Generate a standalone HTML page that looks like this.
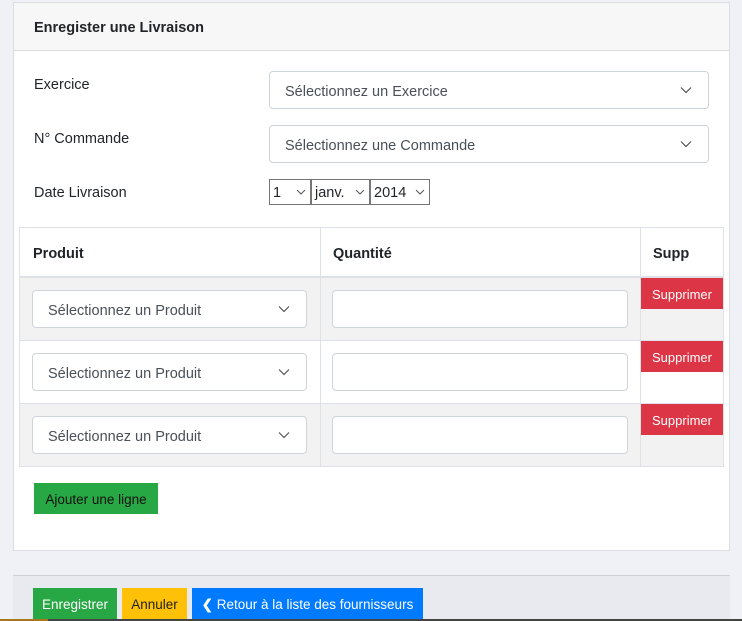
<!DOCTYPE html>
<html><head><meta charset="utf-8"><style>
*{box-sizing:border-box;margin:0;padding:0}
body{width:742px;height:621px;background:#f0f1f6;font-family:"Liberation Sans",sans-serif;color:#212529;position:relative;overflow:hidden;font-size:14px}
.a{position:absolute}
.card{left:13px;top:2px;width:717px;height:549px;background:#fff;border:1px solid #dcdde2}
.hdr{left:14px;top:3px;width:715px;height:48px;background:#f7f7f7;border-bottom:1px solid #dcdde2}
.t{font-weight:bold;font-size:14.5px;left:34px;top:20px}
.lbl{left:34px;font-size:14.5px}
.sel{background:#fff;border:1px solid #ced4da;border-radius:4px;color:#495057;font-size:14.5px;padding-left:15px;padding-top:3px;display:flex;align-items:center}
.chev{position:absolute;right:16px;top:50%;margin-top:-4px}
.ds{border:1px solid #767676;height:26px;top:179px;font-size:14.5px;padding-left:3px;line-height:27px;background:#fff}
.tb{left:19px;top:227px;width:705px;height:240px;border:1px solid #dee2e6}
.th{font-weight:bold;font-size:14.5px;top:246px}
.row{left:20px;width:703px;border-top:1px solid #dee2e6}
.vl{width:1px;background:#dee2e6;top:228px;height:238px}
.del{left:641px;width:82px;height:31px;background:#dc3545;color:#fff;font-size:13px;text-align:center;line-height:34px}
.inp{left:332px;width:296px;height:38px;background:#fff;border:1px solid #ced4da;border-radius:4px}
.btn{height:31px;line-height:33px;font-size:13.5px;text-align:center}
</style></head><body>
<div class="a card"></div>
<div class="a hdr"></div>
<div class="a t">Enregister une Livraison</div>
<div class="a lbl" style="top:77px">Exercice</div>
<div class="a lbl" style="top:131px">N° Commande</div>
<div class="a lbl" style="top:185px">Date Livraison</div>
<div class="a sel" style="left:269px;top:71px;width:440px;height:38px">Sélectionnez un Exercice<svg class="chev" width="12" height="8" viewBox="0 0 12 8"><path d="M1 1.5l5 5 5-5" fill="none" stroke="#444" stroke-width="1"/></svg></div>
<div class="a sel" style="left:269px;top:125px;width:440px;height:38px">Sélectionnez une Commande<svg class="chev" width="12" height="8" viewBox="0 0 12 8"><path d="M1 1.5l5 5 5-5" fill="none" stroke="#444" stroke-width="1"/></svg></div>
<div class="a ds" style="left:269px;width:42px">1<svg style="position:absolute;right:4px;top:9px" width="10" height="7" viewBox="0 0 10 7"><path d="M1 1l4 4 4-4" fill="none" stroke="#555"/></svg></div>
<div class="a ds" style="left:311px;width:59px">janv.<svg style="position:absolute;right:4px;top:9px" width="10" height="7" viewBox="0 0 10 7"><path d="M1 1l4 4 4-4" fill="none" stroke="#555"/></svg></div>
<div class="a ds" style="left:370px;width:60px">2014<svg style="position:absolute;right:4px;top:9px" width="10" height="7" viewBox="0 0 10 7"><path d="M1 1l4 4 4-4" fill="none" stroke="#555"/></svg></div>
<div class="a tb"></div>
<div class="a row" style="top:276px;height:65px;background:#f2f2f2;border-top:2px solid #dee2e6"></div>
<div class="a row" style="top:340px;height:64px;background:#fff"></div>
<div class="a row" style="top:403px;height:63px;background:#f2f2f2"></div>
<div class="a vl" style="left:320px"></div>
<div class="a vl" style="left:640px"></div>
<div class="a th" style="left:33px">Produit</div>
<div class="a th" style="left:333px">Quantité</div>
<div class="a th" style="left:653px">Supp</div>
<div class="a sel" style="left:32px;top:290px;width:275px;height:38px">Sélectionnez un Produit<svg class="chev" width="12" height="8" viewBox="0 0 12 8"><path d="M1 1.5l5 5 5-5" fill="none" stroke="#444" stroke-width="1"/></svg></div>
<div class="a sel" style="left:32px;top:353px;width:275px;height:38px">Sélectionnez un Produit<svg class="chev" width="12" height="8" viewBox="0 0 12 8"><path d="M1 1.5l5 5 5-5" fill="none" stroke="#444" stroke-width="1"/></svg></div>
<div class="a sel" style="left:32px;top:416px;width:275px;height:38px">Sélectionnez un Produit<svg class="chev" width="12" height="8" viewBox="0 0 12 8"><path d="M1 1.5l5 5 5-5" fill="none" stroke="#444" stroke-width="1"/></svg></div>
<div class="a inp" style="top:290px"></div>
<div class="a inp" style="top:353px"></div>
<div class="a inp" style="top:416px"></div>
<div class="a del" style="top:278px">Supprimer</div>
<div class="a del" style="top:341px">Supprimer</div>
<div class="a del" style="top:404px">Supprimer</div>
<div class="a btn" style="left:34px;top:483px;width:124px;background:#28a745;color:#111">Ajouter une ligne</div>
<div class="a" style="left:13px;top:575px;width:717px;height:46px;background:#e9eaef;border-top:1px solid #cfd0d5"></div>
<div class="a btn" style="left:33px;top:588px;width:84px;background:#28a745;color:#fff">Enregistrer</div>
<div class="a btn" style="left:122px;top:588px;width:65px;background:#ffc107;color:#222">Annuler</div>
<div class="a btn" style="left:192px;top:588px;width:231px;background:#007bff;color:#fff"><b>&#10094;</b> Retour à la liste des fournisseurs</div>
<div class="a" style="left:0;top:619px;width:742px;height:2px;background:#444"></div>
<div class="a" style="left:0;top:619px;width:48px;height:2px;background:#a8761e"></div>
</body></html>
